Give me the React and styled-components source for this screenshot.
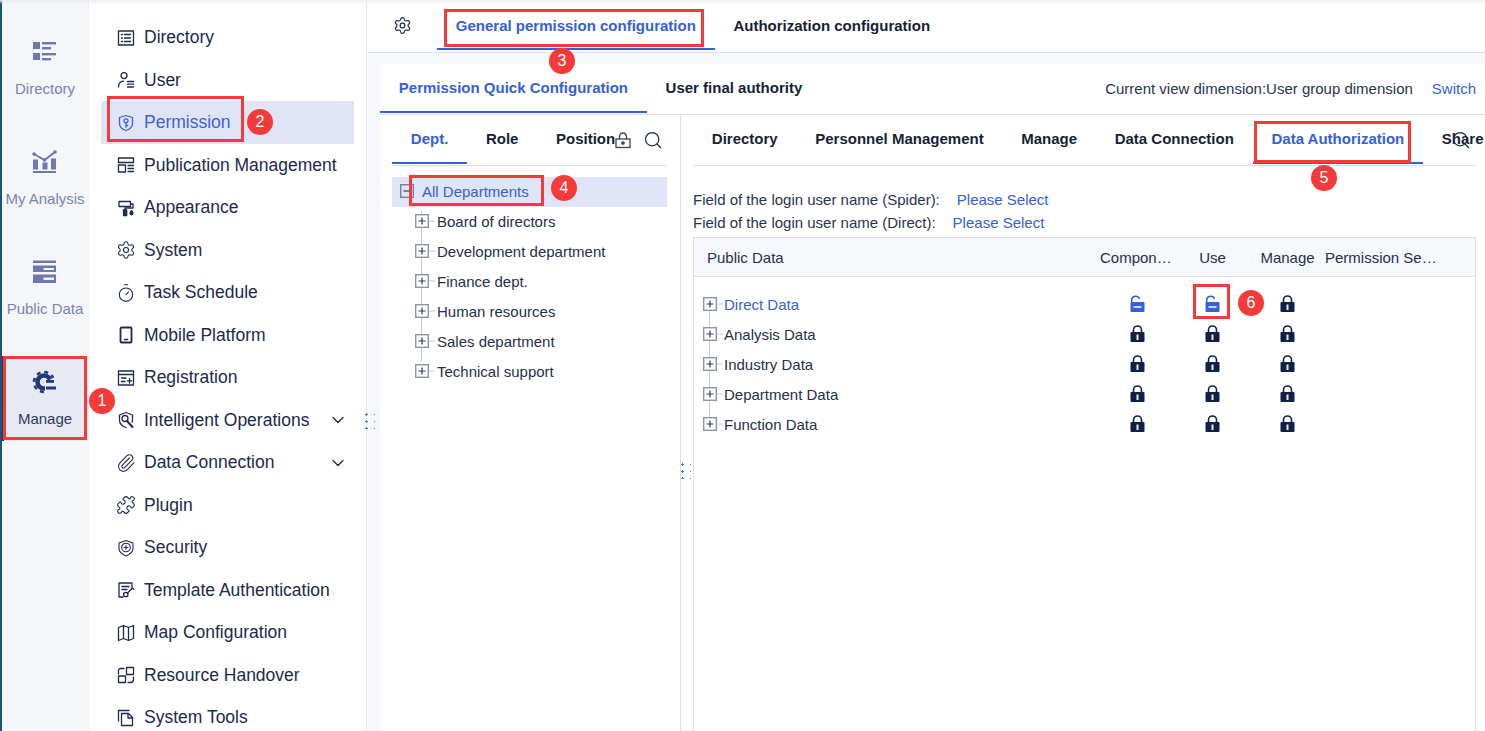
import React from "react";
import styled, { createGlobalStyle } from "styled-components";
import { ChevronDown, Search, Settings, Timer, Paperclip, Puzzle } from "lucide-react";

const NAVY = "#1b2a4e";
const BLUE = "#3560d8";
const LINE = "#dcdfe8";

const Global = createGlobalStyle`
  html, body { margin: 0; padding: 0; height: 100%; overflow: hidden; background: #fff; }
  body { font-family: "Liberation Sans", Arial, sans-serif; color: ${NAVY}; }
  #root { height: 100%; }
  * { box-sizing: border-box; }
`;

const Page = styled.div`
  position: relative; display: flex; width: 1485px; height: 731px; overflow: hidden;
`;
const TopShade = styled.div`
  position: absolute; left: 0; right: 0; top: 0; height: 4px; z-index: 3;
  background: linear-gradient(#eceef1, rgba(245,246,250,0));
`;

/* rail */
const Rail = styled.aside`
  flex: 0 0 89px; display: flex; flex-direction: column; gap: 25px; padding-top: 26px;
  border-left: 2px solid #1b5670; border-right: 1px solid #eef0f6; background: #f5f6fa;
`;
const RailItem = styled.div`
  height: 85px; display: flex; flex-direction: column; align-items: center; padding-top: 13px; gap: 15px;
  font-size: 15px; line-height: 20px; white-space: nowrap;
  color: ${p => (p.$active ? "#2b3a66" : "#7c84ae")};
  background: ${p => (p.$active ? "#e8eaf3" : "transparent")};
  box-shadow: ${p => (p.$active ? "inset 2px 0 0 #1e3a6e" : "none")};
`;
const RailGlyph = styled.svg`
  display: block; width: 26px; height: 26px; flex: none; margin-bottom: -1px;
`;

/* secondary nav */
const Nav = styled.nav`
  flex: 0 0 278px; padding: 16.3px 12px 0; border-right: 1px solid #e6e8ef; background: #fff; overflow: hidden;
`;
const NavItem = styled.div`
  display: flex; align-items: center; height: 42.5px; padding: 0 6px 0 16px; gap: 9px;
  font-size: 17.5px; white-space: nowrap;
  color: ${p => (p.$active ? "#3f5fdc" : NAVY)};
  background: ${p => (p.$active ? "#dfe5f7" : "transparent")};
  svg { flex: none; }
`;
const NavLabel = styled.span` flex: 1; `;
const WideGlyph = styled.span`
  display: flex; margin: 0 -1px; flex: none;
`;

/* main */
const Main = styled.main`
  flex: 1; min-width: 0; display: flex; flex-direction: column; background: #f7f8fc;
`;
const TopBar = styled.div`
  flex: 0 0 53px; display: flex; align-items: stretch; padding-left: 26px; background: #fff;
  border-bottom: 1px solid ${LINE};
`;
const GearSlot = styled.div`
  display: flex; align-items: center; width: 44px; padding-bottom: 2px; color: ${NAVY};
`;
const Tab = styled.div`
  position: relative; display: flex; align-items: center; padding: 0 18.8px ${p => p.$pb || "4px"}; height: 100%;
  font-size: 15px; font-weight: 700; white-space: nowrap;
  color: ${p => (p.$active ? BLUE : "#161f36")};
  &::after {
    content: ""; position: absolute; left: 0; right: 0; bottom: ${p => p.$lineBottom || "1px"}; height: 2.5px;
    background: ${p => (p.$active ? BLUE : "transparent")};
  }
`;
const Body = styled.div`
  flex: 1; min-height: 0; display: flex; flex-direction: column; margin: 11px 0 0 13px; background: #fff;
`;
const SubBar = styled.div`
  flex: 0 0 51px; display: flex; align-items: stretch; border-bottom: 1px solid ${LINE}; padding-right: 9px;
`;
const ViewInfo = styled.div`
  margin-left: auto; display: flex; align-items: center; gap: 19px; font-size: 15px; color: #29344f; padding-bottom: 2px;
`;
const Link = styled.span`
  color: ${BLUE}; font-size: 15px;
`;
const Panes = styled.div`
  flex: 1; min-height: 0; display: flex;
`;
const LeftPane = styled.section`
  position: relative; flex: 0 0 301px; padding: 0 13px 0 12px; border-right: 1px solid ${LINE};
`;
const PaneTabs = styled.div`
  position: relative; display: flex; height: 51px; border-bottom: 1px solid ${LINE};
`;
const PaneTools = styled.div`
  position: absolute; right: ${p => p.$right}; top: 15px; display: flex; align-items: center; gap: 11px; color: ${NAVY};
`;
const Tree = styled.div`
  position: relative; padding-top: 11px;
`;
const TreeRow = styled.div`
  position: relative; display: flex; align-items: center; height: 30px; gap: ${p => p.$gap || "2px"}; font-size: 15px;
  padding-left: ${p => p.$indent || "23px"}; padding-bottom: 2px;
  color: ${p => (p.$active ? BLUE : "#25304c")};
  background: ${p => (p.$selected ? "#dfe5f7" : "transparent")};
`;
const Guide = styled.div`
  position: absolute; left: ${p => p.$left}; top: ${p => p.$top}; height: ${p => p.$h}; width: 1px; background: #c3c8d4;
`;
const RightPane = styled.section`
  position: relative; flex: 1; min-width: 0; padding: 0 9px 0 12px; display: flex; flex-direction: column;
`;
const Fields = styled.div`
  padding-top: 22px; margin-bottom: 3px;
`;
const FieldRow = styled.div`
  display: flex; height: 23px; align-items: center; gap: ${p => p.$gap}; font-size: 15px; color: #29344f;
`;
const Table = styled.div`
  flex: 1; border: 1px solid ${LINE}; border-bottom: 0;
`;
const HeadRow = styled.div`
  display: flex; align-items: center; height: 39px; background: #f7f8fc; border-bottom: 1px solid ${LINE}; font-size: 15px;
  color: #25304c;
`;
const NameCol = styled.div`
  flex: 1; min-width: 0; padding-left: 13px;
`;
const Col = styled.div`
  flex: 0 0 ${p => p.$w || "75px"}; text-align: ${p => p.$align || "center"};
  display: ${p => (p.$icon ? "flex" : "block")}; justify-content: center;
  padding-bottom: ${p => (p.$icon ? "2px" : "0")};
`;
const Clip = styled.span`
  display: block; overflow: hidden; white-space: nowrap; text-overflow: ellipsis; width: ${p => p.$w}; margin: 0 auto 0 0;
`;
const Rows = styled.div`
  position: relative; padding-top: 12px;
`;
const DataRow = styled.div`
  display: flex; align-items: center; height: 30px; font-size: 15px;
  color: ${p => (p.$active ? BLUE : "#25304c")};
`;
const RowName = styled.div`
  flex: 1; display: flex; align-items: center; gap: 1px; padding-left: 9px;
`;
const Annot = styled.div`
  position: absolute; z-index: 5; left: ${p => p.$x}px; top: ${p => p.$y}px; width: ${p => p.$w}px; height: ${p => p.$h}px;
  border: 3px solid #f53a3a;
`;
const Badge = styled.div`
  position: absolute; z-index: 6; left: ${p => p.$x - 13}px; top: ${p => p.$y - 13}px; width: 26px; height: 26px; border-radius: 50%;
  background: #f53a3a; color: #fff; font-size: 16px; line-height: 26px; text-align: center;
`;
const Dots = styled.div`
  position: absolute; z-index: 2; left: ${p => p.$x}px; top: ${p => p.$y}px; width: 10px; height: 17px;
  background-image: radial-gradient(circle, #3f87a6 1px, transparent 1.3px);
  background-size: 9px 7px; background-position: -3px -1px;
`;

const Ico = ({ children, s = 18, w = 1.3 }) => (
  <svg width={s} height={s} viewBox="0 0 18 18" fill="none" stroke="currentColor" strokeWidth={w} strokeLinecap="round" strokeLinejoin="round">
    {children}
  </svg>
);
const L = ({ as: C }) => <WideGlyph><C size={20} strokeWidth={1.3} /></WideGlyph>;

const IDirectory = () => <Ico><rect x="1.500" y="2" width="15" height="14" /><path d="M4.500 5.500h1M7.500 5.500h6M4.500 9h1M7.500 9h6M4.500 12.500h1M7.500 12.500h6" /></Ico>;
const IUser = () => <Ico><circle cx="7" cy="4.600" r="3" /><path d="M1.500 16c0-3.200 2-5.500 5-5.800M10.500 10.500h6M10.500 13.200h6M10.500 16h6" /></Ico>;
const IPerm = () => <Ico><path d="M9 1.500l6.500 2v6c0 3.500-3 5.800-6.500 7-3.500-1.200-6.500-3.500-6.500-7v-6z" /><circle cx="9" cy="6.800" r="2" /><path d="M9 8.800v4.400M9 11.500h1.800" /></Ico>;
const IPub = () => <Ico><rect x="1.500" y="2" width="15" height="4.500" /><path d="M1.500 9h7v7h-7zM11 9.500h5.500M11 12.500h5.500M11 15.500h5.500" /></Ico>;
const IAppear = () => (
  <Ico><path d="M2 2.500h11.500v5H2z" /><path d="M13.500 5h2.500v4H8v2" /><rect x="6.500" y="11" width="3.200" height="5.500" fill="currentColor" /><path d="M14.500 11.500c-1 1.400-1.500 2-1.500 2.800a1.500 1.500 0 0 0 3 0c0-.8-.5-1.400-1.500-2.800z" fill="currentColor" /></Ico>
);
const IMobile = () => <Ico><rect x="3.500" y="1.500" width="11" height="15" rx="1" strokeWidth="1.800" /><path d="M7.500 13.500h3" /></Ico>;
const IReg = () => <Ico><rect x="1.500" y="2" width="15" height="14" /><path d="M1.500 5.500h15M4.500 9h4.500M4.500 12.500h3.500M12.500 9.500v4.500M10.300 11.800h4.500" /></Ico>;
const IOps = () => <Ico><path d="M9 1.500l6.500 2.500v5c0 .8-.1 1.500-.4 2.200M9 16.500c-3.500-1.200-6.500-3.500-6.500-7.500V4L9 1.500" /><circle cx="8" cy="7.500" r="3" /><path d="M10 10l5.500 6" strokeWidth="2" /></Ico>;
const IShield = () => <Ico w={1.1}><path d="M9 1.500l7 2.500v5.500c0 3.500-3 5.800-7 7.500-4-1.700-7-4-7-7.500V4z" /><circle cx="9" cy="8.500" r="4.300" /><path d="M9 6.500v4M7 8.500h4" /></Ico>;
const ITpl = () => <Ico><path d="M15 7V2H2v14h4" /><path d="M5 5.500h7M5 8.500h5" /><circle cx="8.800" cy="13.500" r="2.200" /><path d="M10.500 12l5-5 1.200 1.200" /></Ico>;
const IHand = () => <Ico><path d="M9.500 1.500h7v7h-7zM1.500 10h7v6.500h-7zM1.500 8V4.500a2 2 0 0 1 2-2H7M16.500 11v2.500a3 3 0 0 1-3 3H11" /></Ico>;
const IMapIco = () => <Ico><path d="M1.500 3.500l5-2 5 2 5-2v13l-5 2-5-2-5 2zM6.500 1.500v13M11.500 3.500v13" /></Ico>;
const ICopy = () => <Ico><path d="M1.500 12V1.500H12" /><path d="M4.500 4.500h7l4 4v8h-11z" /><path d="M11 4.500v4.500h4.500" /></Ico>;
const IBox = () => (
  <svg width="20" height="14" viewBox="0 0 20 14" fill="none" style={{ flex: "none", position: "relative", zIndex: 1 }}>
    <rect x=".7" y=".7" width="12.600" height="12.600" fill="#fff" stroke="#8e95a8" strokeWidth="1.400" />
    <path d="M3.500 7h7M7 3.500v7" stroke="#333c55" strokeWidth="1.200" />
    <path d="M14 7h6" stroke="#c3c8d4" />
  </svg>
);
const IBoxMinus = () => (
  <svg width="14" height="14" viewBox="0 0 14 14" fill="none" style={{ flex: "none", marginRight: "6px" }}>
    <rect x=".7" y=".7" width="12.600" height="12.600" stroke="#7a8196" strokeWidth="1.400" />
    <path d="M3.500 7h7" stroke="#333c55" strokeWidth="1.200" />
  </svg>
);
const LockClosed = () => (
  <svg width="15" height="17" viewBox="0 0 15 17" style={{ display: "block" }}>
    <path d="M3.500 8V5a4 4 0 0 1 8 0v3" fill="none" stroke="#0f2148" strokeWidth="1.600" />
    <rect x=".5" y="7" width="14" height="10" rx="1" fill="#0f2148" />
    <rect x="6.500" y="9.500" width="2" height="5.500" fill="#f3ead8" />
  </svg>
);
const LockOpen = () => (
  <svg width="15" height="17" viewBox="0 0 15 17" style={{ display: "block" }}>
    <path d="M1.700 8V5a4 4 0 0 1 7.800-1" fill="none" stroke="#3560d8" strokeWidth="1.500" />
    <rect x=".5" y="7" width="14" height="10" rx="1" fill="#3560d8" />
    <rect x="3.500" y="11.200" width="8" height="1.600" fill="#eef1fb" />
  </svg>
);
const SmallLock = () => (
  <svg width="18" height="18" viewBox="0 0 18 18" fill="none" stroke="#3b4358" strokeWidth="1.300">
    <path d="M5.500 8V5.500a3.500 3.500 0 0 1 7 0V8" />
    <rect x="2" y="8" width="14" height="8.500" />
    <circle cx="9" cy="12" r="1.200" fill="#3b4358" />
  </svg>
);

const RDirectory = () => (
  <RailGlyph viewBox="0 0 26 26" fill="#6d79ad">
    <rect x="1" y="3" width="7" height="7" /><rect x="1" y="14" width="7" height="7" />
    <rect x="10" y="3" width="14" height="2.400" /><rect x="10" y="8" width="9" height="2.400" />
    <rect x="10" y="14" width="14" height="2.400" /><rect x="10" y="19" width="9" height="2.400" />
  </RailGlyph>
);
const RAnalysis = () => (
  <RailGlyph viewBox="0 0 26 26" fill="#6d79ad">
    <rect x="1" y="10.500" width="5" height="10" /><rect x="10.500" y="13.500" width="5" height="7" /><rect x="19" y="9.500" width="5" height="11" />
    <rect x="1" y="22" width="23" height="2" />
    <path d="M2 5l10.500 6L23 3" fill="none" stroke="#6d79ad" strokeWidth="2" />
    <circle cx="2" cy="5" r="1.800" /><circle cx="12.500" cy="11" r="1.800" /><circle cx="23" cy="3" r="1.800" />
  </RailGlyph>
);
const RPublic = () => (
  <RailGlyph viewBox="0 0 26 26" fill="#6d79ad">
    <rect x="1" y="1.500" width="23" height="2.500" />
    <path d="M1 6.500h23v6.500H1zM11.500 9v2h10.500V9zM1 15.500h23V24H1zM11.500 18.500v2.500h10.500v-2.500z" fillRule="evenodd" />
  </RailGlyph>
);
const RManage = () => (
  <RailGlyph viewBox="0 0 26 26">
    <defs>
      <mask id="gm"><rect width="26" height="26" fill="#fff" /><path d="M13 13L27 6v20H13z" fill="#000" /></mask>
    </defs>
    <g mask="url(#gm)" fill="none" stroke="#1e3a78">
      <circle cx="12" cy="13" r="6.500" strokeWidth="4.500" />
      <circle cx="12" cy="13" r="10" strokeWidth="2.600" strokeDasharray="4 3.850" />
    </g>
    <rect x="14" y="11" width="8" height="2.800" fill="#1e3a78" />
    <rect x="14" y="17.500" width="10" height="3" fill="#1e3a78" />
  </RailGlyph>
);

const navItems = [
  ["Directory", <IDirectory />], ["User", <IUser />], ["Permission", <IPerm />, true],
  ["Publication Management", <IPub />], ["Appearance", <IAppear />], ["System", <L as={Settings} />],
  ["Task Schedule", <L as={Timer} />], ["Mobile Platform", <IMobile />], ["Registration", <IReg />],
  ["Intelligent Operations", <IOps />, false, true], ["Data Connection", <L as={Paperclip} />, false, true],
  ["Plugin", <L as={Puzzle} />], ["Security", <IShield />], ["Template Authentication", <ITpl />],
  ["Map Configuration", <IMapIco />], ["Resource Handover", <IHand />], ["System Tools", <ICopy />],
];
const depts = ["Board of directors", "Development department", "Finance dept.", "Human resources", "Sales department", "Technical support"];
const dataRows = ["Direct Data", "Analysis Data", "Industry Data", "Department Data", "Function Data"];
const boxes = [[3, 356, 84, 84], [107, 96, 137, 46], [444, 9, 260, 38], [409, 175, 135, 31], [1254, 121, 157, 42], [1193, 284, 37, 35]];
const badges = [[102, 401, 1], [260, 122, 2], [562, 61, 3], [564, 188, 4], [1324, 178, 5], [1251, 303, 6]];

export default function App() {
  return (
    <Page>
      <Global />
      <TopShade />
      <Rail>
        <RailItem><RDirectory />Directory</RailItem>
        <RailItem><RAnalysis />My Analysis</RailItem>
        <RailItem><RPublic />Public Data</RailItem>
        <RailItem $active><RManage />Manage</RailItem>
      </Rail>
      <Nav>
        {navItems.map(([label, icon, active, more]) => (
          <NavItem key={label} $active={active}>
            {icon}
            <NavLabel>{label}</NavLabel>
            {more && <ChevronDown size={20} strokeWidth={1.6} />}
          </NavItem>
        ))}
      </Nav>
      <Dots $x={365} $y={412} />
      <Main>
        <TopBar>
          <GearSlot><Settings size={19} strokeWidth={1.5} /></GearSlot>
          <Tab $active $pb="2px" $lineBottom="2px">General permission configuration</Tab>
          <Tab $pb="2px">Authorization configuration</Tab>
        </TopBar>
        <Body>
          <SubBar>
            <Tab $active>Permission Quick Configuration</Tab>
            <Tab>User final authority</Tab>
            <ViewInfo>
              <span>Current view dimension:User group dimension</span>
              <Link>Switch</Link>
            </ViewInfo>
          </SubBar>
          <Panes>
            <LeftPane>
              <PaneTabs>
                <Tab $active>Dept.</Tab>
                <Tab>Role</Tab>
                <Tab>Position</Tab>
                <PaneTools $right="4px">
                  <SmallLock />
                  <Search size={20} strokeWidth={1.5} />
                </PaneTools>
              </PaneTabs>
              <Tree>
                <Guide $left="29px" $top="45px" $h="150px" />
                <TreeRow $selected $active $indent="8px"><IBoxMinus />All Departments</TreeRow>
                {depts.map(d => <TreeRow key={d}><IBox />{d}</TreeRow>)}
              </Tree>
            </LeftPane>
            <RightPane>
              <PaneTabs>
                <Tab>Directory</Tab>
                <Tab>Personnel Management</Tab>
                <Tab>Manage</Tab>
                <Tab>Data Connection</Tab>
                <Tab $active>Data Authorization</Tab>
                <Tab>Share</Tab>
                <PaneTools $right="5px"><Search size={20} strokeWidth={1.5} /></PaneTools>
              </PaneTabs>
              <Fields>
                <FieldRow $gap="17px"><span>Field of the login user name (Spider):</span><Link>Please Select</Link></FieldRow>
                <FieldRow $gap="17px"><span>Field of the login user name (Direct):</span><Link>Please Select</Link></FieldRow>
              </Fields>
              <Table>
                <HeadRow>
                  <NameCol>Public Data</NameCol>
                  <Col $align="left"><Clip $w="74px">Component</Clip></Col>
                  <Col>Use</Col>
                  <Col>Manage</Col>
                  <Col $w="150px" $align="left"><Clip $w="115px">Permission Settings</Clip></Col>
                </HeadRow>
                <Rows>
                  <Guide $left="15px" $top="22px" $h="120px" />
                  {dataRows.map((r, i) => (
                    <DataRow key={r} $active={i === 0}>
                      <RowName><IBox />{r}</RowName>
                      <Col $icon>{i === 0 ? <LockOpen /> : <LockClosed />}</Col>
                      <Col $icon>{i === 0 ? <LockOpen /> : <LockClosed />}</Col>
                      <Col $icon><LockClosed /></Col>
                      <Col $w="150px" />
                    </DataRow>
                  ))}
                </Rows>
              </Table>
            </RightPane>
          </Panes>
        </Body>
      </Main>
      <Dots $x={681} $y={462} />
      {boxes.map(([x, y, w, h]) => <Annot key={x} $x={x} $y={y} $w={w} $h={h} />)}
      {badges.map(([x, y, n]) => <Badge key={n} $x={x} $y={y}>{n}</Badge>)}
    </Page>
  );
}
